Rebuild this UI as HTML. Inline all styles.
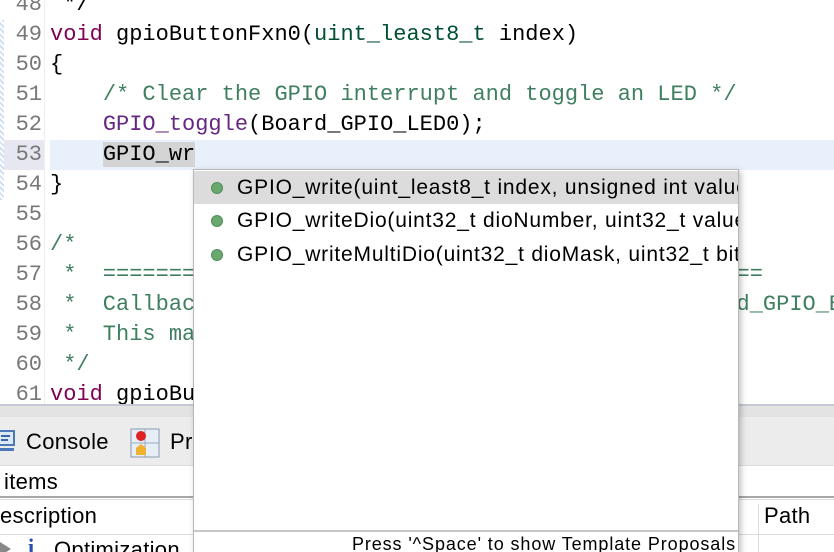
<!DOCTYPE html>
<html><head><meta charset="utf-8"><style>
*{margin:0;padding:0;box-sizing:border-box}
html,body{width:834px;height:552px;overflow:hidden}
body{background:#fff;position:relative;font-family:"Liberation Sans",Arial,sans-serif}
.ed{position:absolute;left:0;top:0;width:834px;height:404px;background:#fff;overflow:hidden}
.stripe{position:absolute;left:0;top:20px;width:4px;height:180px;background:repeating-linear-gradient(45deg,#cfe0f5 0 2px,#fff 2px 4px)}
.hl{position:absolute;left:50px;top:140px;width:784px;height:30px;background:#e8f0fb}
.gut53{position:absolute;left:4px;top:140px;width:40px;height:30px;background:#e6e7f0}
.ln{position:absolute;left:0;width:42px;text-align:right;font:22px/30px "Liberation Mono",monospace;color:#787878}
.cd{position:absolute;left:50px;font:22px/30px "Liberation Mono",monospace;color:#000;white-space:pre}
.k{color:#7f0055}.c{color:#3f7f5f}.f{color:#642880}.t{color:#005032}
.sel{background:#d4d4d4}
.gl{position:absolute;left:44px;top:0;width:1px;height:404px;background:#eee}
.pan{position:absolute;left:0;top:404px;width:834px;height:148px;overflow:hidden}
.pan .tx{position:absolute;font-size:22px;line-height:28px;letter-spacing:.3px}
.pop{position:absolute;left:193px;top:169px;width:546px;height:390px;background:#fff;border:1px solid #b8b8b8;box-shadow:2px 2px 6px rgba(0,0,0,.25);overflow:hidden}
.row{position:absolute;left:0;width:546px;height:33px;font-size:21px;letter-spacing:.8px;line-height:33px;color:#000;white-space:nowrap;padding-left:43px}
.row i{position:absolute;left:17px;top:11px;width:12px;height:12px;border-radius:50%;background:#6aa870;border:1px solid #4f8f58}
.stat{position:absolute;left:0;top:360px;width:546px;height:30px;border-top:2px solid #c8c8c8;font-size:18px;letter-spacing:.9px;line-height:24px;text-align:right;padding-right:4px;color:#000;white-space:nowrap}
</style></head><body>
<div class="ed">
<div class="stripe"></div>
<div class="hl"></div><div class="gut53"></div>
<div class="gl"></div>
<div class="ln" style="top:-10px">48</div><div class="cd" style="top:-10px"> */</div>
<div class="ln" style="top:20px">49</div><div class="cd" style="top:20px"><span class="k">void</span> gpioButtonFxn0(<span class="t">uint_least8_t</span> index)</div>
<div class="ln" style="top:50px">50</div><div class="cd" style="top:50px">{</div>
<div class="ln" style="top:80px">51</div><div class="cd" style="top:80px">    <span class="c">/* Clear the GPIO interrupt and toggle an LED */</span></div>
<div class="ln" style="top:110px">52</div><div class="cd" style="top:110px">    <span class="f">GPIO_toggle</span>(Board_GPIO_LED0);</div>
<div class="ln" style="top:140px">53</div><div class="cd" style="top:140px">    <span class="sel">GPIO_wr</span></div>
<div class="ln" style="top:170px">54</div><div class="cd" style="top:170px">}</div>
<div class="ln" style="top:200px">55</div>
<div class="ln" style="top:230px">56</div><div class="cd c" style="top:230px">/*</div>
<div class="ln" style="top:260px">57</div><div class="cd c" style="top:260px"> *  ==================================================</div>
<div class="ln" style="top:290px">58</div><div class="cd c" style="top:290px"> *  Callback function for the GPIO interrupt on Board_GPIO_BUTTON1.</div>
<div class="ln" style="top:320px">59</div><div class="cd c" style="top:320px"> *  This may not be used for all boards.</div>
<div class="ln" style="top:350px">60</div><div class="cd c" style="top:350px"> */</div>
<div class="ln" style="top:380px">61</div><div class="cd" style="top:380px"><span class="k">void</span> gpioButtonFxn1(</div>
</div>
<div class="pan">
<div style="position:absolute;left:0;top:0;width:834px;height:2px;background:#c6cad4"></div>
<div style="position:absolute;left:0;top:2px;width:834px;height:11px;background:#e3e3e3"></div>
<div style="position:absolute;left:0;top:13px;width:834px;height:48px;background:#ececec"></div>
<svg style="position:absolute;left:-2px;top:24px" width="20" height="26"><rect x="0" y="2" width="17" height="16" fill="#4a78b8"/><rect x="2" y="4" width="13" height="12" fill="#dde8f6"/><rect x="3" y="7" width="9" height="2" fill="#3a64a6"/><rect x="3" y="11" width="7" height="2" fill="#3a64a6"/><rect x="2" y="20" width="14" height="3" fill="#4a78b8"/></svg>
<div class="tx" style="left:26px;top:24px">Console</div>
<svg style="position:absolute;left:130px;top:24px" width="30" height="30"><rect x="1" y="1" width="28" height="28" fill="#e6eef8" stroke="#8a9ab0"/><line x1="15" y1="1" x2="15" y2="29" stroke="#9aaac0"/><line x1="1" y1="15" x2="29" y2="15" stroke="#9aaac0"/><circle cx="11" cy="8" r="5" fill="#d22"/><path d="M6 27 L6 20 L11 16 L16 20 L16 27Z" fill="#f0b030"/></svg>
<div class="tx" style="left:170px;top:24px">Pr</div>
<div style="position:absolute;left:0;top:61px;width:834px;height:1px;background:#ddd"></div>
<div class="tx" style="left:4px;top:64px">items</div>
<div style="position:absolute;left:0;top:92px;width:834px;height:2px;background:#a8a8a8"></div>
<div style="position:absolute;left:0;top:95px;width:834px;height:1px;background:#ddd"></div>
<div class="tx" style="left:0;top:98px">escription</div>
<div style="position:absolute;left:758px;top:100px;width:1px;height:48px;background:#ddd"></div>
<div class="tx" style="left:764px;top:98px">Path</div>
<div style="position:absolute;left:0;top:130px;width:834px;height:1px;background:#ddd"></div>
<div style="position:absolute;left:0;top:138px;width:0;height:0;border-left:11px solid #888;border-top:7px solid transparent;border-bottom:7px solid transparent"></div>
<div style="position:absolute;left:28px;top:128px;font:bold 22px/30px 'Liberation Serif',serif;color:#2850b0">i</div>
<div class="tx" style="left:54px;top:132px">Optimization</div>
</div>
<div class="pop">
<div class="row" style="top:1px;background:#dcdcdc"><i></i>GPIO_write(uint_least8_t index, unsigned int value) : void</div>
<div class="row" style="top:34px"><i></i>GPIO_writeDio(uint32_t dioNumber, uint32_t value) : void</div>
<div class="row" style="top:68px"><i></i>GPIO_writeMultiDio(uint32_t dioMask, uint32_t bitVectoredValue) : void</div>
<div class="stat">Press '^Space' to show Template Proposals</div>
</div>
</body></html>
